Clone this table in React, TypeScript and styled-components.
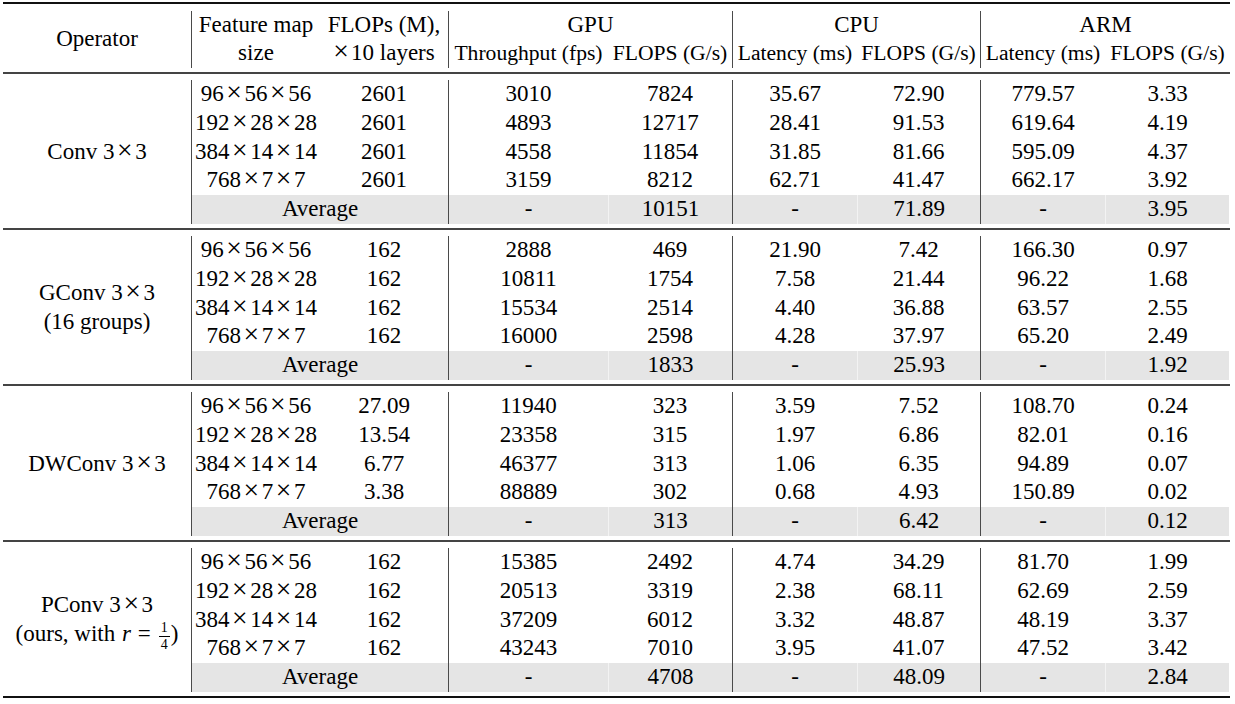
import React from "react";
import styled, { createGlobalStyle } from "styled-components";

const Global = createGlobalStyle`
  html, body { margin: 0; padding: 0; background: #fff; }
  body { font-family: "Liberation Serif", "Times New Roman", serif; color: #000; }
`;

const COLS = "188px 129px 128px 160px 124px 125px 123px 125px 125px";

const Page = styled.div`
  padding: 2px 0 0 3px;
  width: 1227px;
`;

const Table = styled.div`
  width: 1227px;
  border-top: 2px solid #111;
  border-bottom: 2px solid #111;
  font-size: 23px;
`;

const HeadGrid = styled.div`
  display: grid;
  grid-template-columns: ${COLS};
  grid-template-rows: 28.5px 28.5px;
  margin: 7px 0 4px;
`;

const Group = styled.div`
  display: grid;
  grid-template-columns: ${COLS};
  grid-auto-rows: 28.8px;
  border-top: 2px solid #444;
  padding: 6px 0 4px;
`;

const Cell = styled.div<{ $vline?: boolean; $shade?: boolean; $sep?: boolean; $span?: number; $rows?: number; $sub?: boolean; $last?: boolean }>`
  display: flex;
  flex-direction: column;
  align-items: center;
  justify-content: center;
  white-space: nowrap;
  line-height: 28.8px;
  font-size: ${(p) => (p.$sub ? "21.6px" : "23px")};
  grid-column: ${(p) => (p.$span ? `span ${p.$span}` : "auto")};
  grid-row: ${(p) => (p.$rows ? `span ${p.$rows}` : "auto")};
  border-left: ${(p) => (p.$vline ? "1px solid #4a4a4a" : p.$sep ? "1px solid #f3f3f3" : "none")};
  background: ${(p) => (p.$shade ? "#e5e5e5" : "transparent")};
  margin-right: ${(p) => (p.$last ? "1px" : "0")};
`;

const Times = styled.span<{ $tight?: boolean }>`
  font-size: 1.2em;
  line-height: 0;
  margin: ${(p) => (p.$tight ? "0 0.08em 0 0" : "0 0.095em")};
`;

const MathR = styled.span`
  font-style: italic;
  margin-left: 1px;
`;

const Eq = styled.span`
  margin: 0 0.3em;
`;

const Frac = styled.span`
  display: inline-flex;
  flex-direction: column;
  align-items: center;
  vertical-align: 9px;
  font-size: 14px;
  line-height: 14px;
  margin: 0 1px;
`;

const Num = styled.span`
  border-bottom: 1px solid #000;
  padding: 0 2px 1px;
`;

const Den = styled.span`
  padding-top: 1px;
`;

const Line = styled.span`
  display: block;
  height: 28.8px;
`;

const dim = (s: string) => {
  const parts = s.split("×");
  return (
    <Line>
      {parts.map((p, i) => (
        <React.Fragment key={i}>
          {i > 0 && <Times>×</Times>}
          {p}
        </React.Fragment>
      ))}
    </Line>
  );
};

type Row = [string, string, string, string, string, string, string, string];

interface GroupData {
  name: React.ReactNode;
  rows: Row[];
  avg: [string, string, string, string, string, string];
}

const sizes = ["96×56×56", "192×28×28", "384×14×14", "768×7×7"];

const mk = (flops: string[], vals: string[][]): Row[] =>
  vals.map((v, i) => [sizes[i], flops[i], v[0], v[1], v[2], v[3], v[4], v[5]] as Row);

const groups: GroupData[] = [
  {
    name: <Line>Conv 3<Times>×</Times>3</Line>,
    rows: mk(
      ["2601", "2601", "2601", "2601"],
      [
        ["3010", "7824", "35.67", "72.90", "779.57", "3.33"],
        ["4893", "12717", "28.41", "91.53", "619.64", "4.19"],
        ["4558", "11854", "31.85", "81.66", "595.09", "4.37"],
        ["3159", "8212", "62.71", "41.47", "662.17", "3.92"],
      ]
    ),
    avg: ["-", "10151", "-", "71.89", "-", "3.95"],
  },
  {
    name: (
      <>
        <Line>GConv 3<Times>×</Times>3</Line>
        <Line>(16 groups)</Line>
      </>
    ),
    rows: mk(
      ["162", "162", "162", "162"],
      [
        ["2888", "469", "21.90", "7.42", "166.30", "0.97"],
        ["10811", "1754", "7.58", "21.44", "96.22", "1.68"],
        ["15534", "2514", "4.40", "36.88", "63.57", "2.55"],
        ["16000", "2598", "4.28", "37.97", "65.20", "2.49"],
      ]
    ),
    avg: ["-", "1833", "-", "25.93", "-", "1.92"],
  },
  {
    name: <Line>DWConv 3<Times>×</Times>3</Line>,
    rows: mk(
      ["27.09", "13.54", "6.77", "3.38"],
      [
        ["11940", "323", "3.59", "7.52", "108.70", "0.24"],
        ["23358", "315", "1.97", "6.86", "82.01", "0.16"],
        ["46377", "313", "1.06", "6.35", "94.89", "0.07"],
        ["88889", "302", "0.68", "4.93", "150.89", "0.02"],
      ]
    ),
    avg: ["-", "313", "-", "6.42", "-", "0.12"],
  },
  {
    name: (
      <>
        <Line>PConv 3<Times>×</Times>3</Line>
        <Line>
          (ours, with <MathR>r</MathR>
          <Eq>=</Eq>
          <Frac>
            <Num>1</Num>
            <Den>4</Den>
          </Frac>
          )
        </Line>
      </>
    ),
    rows: mk(
      ["162", "162", "162", "162"],
      [
        ["15385", "2492", "4.74", "34.29", "81.70", "1.99"],
        ["20513", "3319", "2.38", "68.11", "62.69", "2.59"],
        ["37209", "6012", "3.32", "48.87", "48.19", "3.37"],
        ["43243", "7010", "3.95", "41.07", "47.52", "3.42"],
      ]
    ),
    avg: ["-", "4708", "-", "48.09", "-", "2.84"],
  },
];

// vertical rule before columns index 1, 3, 5, 7 (0-based, full table)
const VLINE = [false, true, false, true, false, true, false, true, false];

const GroupBlock: React.FC<{ g: GroupData }> = ({ g }) => (
  <Group>
    <Cell $rows={5}>{g.name}</Cell>
    {g.rows.map((r, ri) =>
      r.map((v, ci) => (
        <Cell key={`${ri}-${ci}`} $vline={VLINE[ci + 1]}>
          {ci === 0 ? dim(v) : v}
        </Cell>
      ))
    )}
    <Cell $span={2} $vline $shade>
      Average
    </Cell>
    {g.avg.map((v, i) => (
      <Cell
        key={`avg-${i}`}
        $shade
        $vline={VLINE[i + 3]}
        $sep={!VLINE[i + 3]}
        $last={i === 5}
      >
        {v}
      </Cell>
    ))}
  </Group>
);

export default function App() {
  return (
    <Page>
      <Global />
      <Table>
        <HeadGrid>
          <Cell $rows={2}>Operator</Cell>
          <Cell $vline>Feature map</Cell>
          <Cell>FLOPs (M),</Cell>
          <Cell $vline $span={2}>GPU</Cell>
          <Cell $vline $span={2}>CPU</Cell>
          <Cell $vline $span={2}>ARM</Cell>
          <Cell $vline>size</Cell>
          <Cell>
            <Line>
              <Times $tight>×</Times>10 layers
            </Line>
          </Cell>
          <Cell $vline $sub>Throughput (fps)</Cell>
          <Cell $sub>FLOPS (G/s)</Cell>
          <Cell $vline $sub>Latency (ms)</Cell>
          <Cell $sub>FLOPS (G/s)</Cell>
          <Cell $vline $sub>Latency (ms)</Cell>
          <Cell $sub>FLOPS (G/s)</Cell>
        </HeadGrid>
        {groups.map((g, i) => (
          <GroupBlock key={i} g={g} />
        ))}
      </Table>
    </Page>
  );
}
